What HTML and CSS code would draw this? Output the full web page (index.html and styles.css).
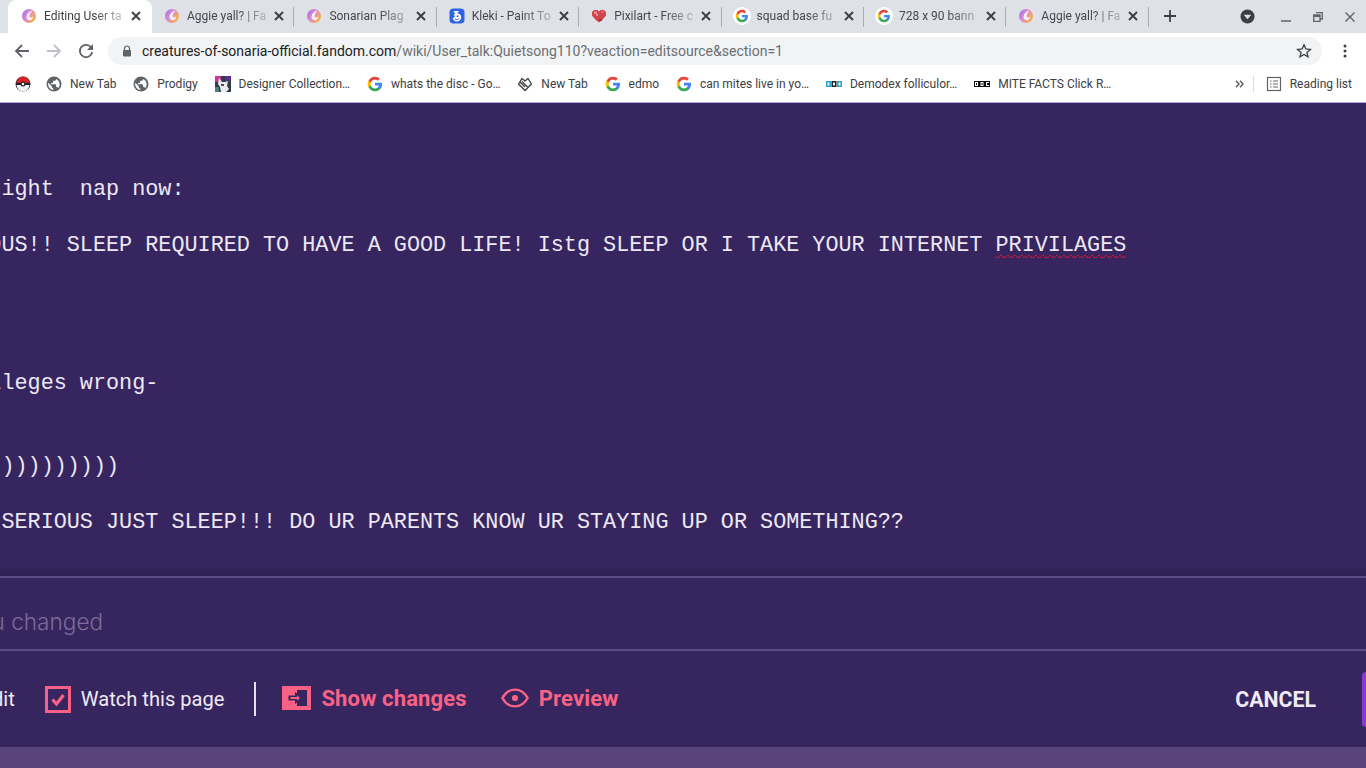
FILE: index.html
```html
<!DOCTYPE html>
<html lang="en">
<head>
<meta charset="utf-8">
<title>Editing User talk</title>
<link rel="stylesheet" href="styles.css">
</head>
<body>
<svg class="defs" width="0" height="0" aria-hidden="true">
  <defs>
    <linearGradient id="fg" x1="0" y1="0" x2="1" y2="0.6"><stop offset="0" stop-color="#9a6cf0"/><stop offset="0.5" stop-color="#dc8ad4"/><stop offset="1" stop-color="#f5b340"/></linearGradient>
    <symbol id="fandom" viewBox="0 0 16 16"><circle cx="8" cy="8" r="7" fill="url(#fg)"/><path d="M11.500 2.800C7.800 3.400 5.200 6.300 5.600 9.500c.3 2 2.200 3.200 4 2.700 1.800-.6 2.600-2.300 2.400-4-.7 1-1.500 1.500-2.500 1.200C8 9 8.500 5.500 11.500 2.800z" fill="#f6eef8"/></symbol>
    <symbol id="g" viewBox="0 0 48 48"><path fill="#4285f4" d="M45.100 24.500c0-1.600-.1-3.100-.4-4.500H24v8.500h11.800c-.5 2.700-2 5-4.400 6.600v5.500h7.100c4.200-3.800 6.600-9.500 6.600-16.100z"/><path fill="#34a853" d="M24 46c5.900 0 10.900-2 14.500-5.300l-7.100-5.500c-2 1.300-4.500 2.100-7.400 2.100-5.700 0-10.500-3.800-12.200-9H4.500v5.700C8.100 41.100 15.500 46 24 46z"/><path fill="#fbbc05" d="M11.800 28.300c-.4-1.300-.7-2.800-.7-4.300s.3-3 .7-4.300V14H4.500C3 17 2 20.400 2 24s1 7 2.500 10l7.300-5.700z"/><path fill="#ea4335" d="M24 10.700c3.200 0 6.100 1.100 8.400 3.300l6.300-6.300C34.900 4.200 29.900 2 24 2 15.500 2 8.100 6.900 4.500 14l7.300 5.700c1.700-5.200 6.500-9 12.200-9z"/></symbol>
    <symbol id="gwhite" viewBox="0 0 16 16"><circle cx="8" cy="8" r="8" fill="#fff"/><use href="#g" x="2" y="2" width="12" height="12"/></symbol>
    <symbol id="globe" viewBox="0 0 16 16"><circle cx="8" cy="8" r="7.500" fill="#5f6368"/><path d="M7.300 13.900C4.400 13.500 2.100 11 2.100 8c0-.5.100-.9.200-1.300l3.500 3.500v.8c0 .8.600 1.400 1.500 1.400zm4.800-1.800c-.2-.6-.7-1-1.300-1h-.7V9c0-.4-.3-.7-.7-.7H5.100V6.900h1.400c.4 0 .7-.3.700-.7V4.800h1.400c.8 0 1.400-.6 1.400-1.400v-.3c2.100.9 3.600 2.900 3.600 5.300 0 1.600-.6 2.800-1.500 3.700z" fill="#fff"/></symbol>
    <symbol id="x" viewBox="0 0 10 10"><path d="M1 1l8 8M9 1L1 9" stroke="#3c4043" stroke-width="1.900" fill="none"/></symbol>
  </defs>
</svg>

<header class="chrome">
  <div class="tabstrip">
    <div class="tab tab-active">
      <svg class="fav"><use href="#fandom"/></svg><span class="tab-title">Editing User ta</span><svg class="tab-x"><use href="#x"/></svg>
    </div>
    <div class="tab">
      <svg class="fav"><use href="#fandom"/></svg><span class="tab-title">Aggie yall? | Fa</span><svg class="tab-x"><use href="#x"/></svg>
    </div>
    <div class="tab">
      <svg class="fav"><use href="#fandom"/></svg><span class="tab-title">Sonarian Plag</span><svg class="tab-x"><use href="#x"/></svg>
    </div>
    <div class="tab">
      <svg class="fav" viewBox="0 0 16 16"><rect x="0.500" y="0.500" width="15" height="15" rx="4" fill="#2f62e4"/><path d="M4.500 3h5.700L8 5.200c2 0 4.200 1.400 4.200 4 0 2.500-2 4.300-4.300 4.300-2.400 0-3.800-1.500-4.200-3.300L6 8.800 4.800 6.500l1.200-1z" fill="#fff"/><circle cx="8.500" cy="8.300" r="1" fill="#2f62e4"/><path d="M6 11.200c1.500.7 3.400.4 4.400-.8" fill="none" stroke="#2f62e4" stroke-width=".9"/></svg><span class="tab-title">Kleki - Paint To</span><svg class="tab-x"><use href="#x"/></svg>
    </div>
    <div class="tab">
      <svg class="fav" viewBox="0 0 16 16"><path d="M1 4l2-2h3.500L8 3.500 9.500 2H13l2 2v3.500l-2 2.500-2.500 2.500L8 14.500 5.500 12.500 3 10 1 7.500z" fill="#d2434c"/><path d="M3 3.500h3v2.500H3zM5 6h2v2H5z" fill="#ea8f8f"/><path d="M10 3h3v2h-3z" fill="#e45f66"/><path d="M8 11h3v2H8z" fill="#a52f38"/></svg><span class="tab-title">Pixilart - Free c</span><svg class="tab-x"><use href="#x"/></svg>
    </div>
    <div class="tab">
      <svg class="fav fav-g"><use href="#gwhite"/></svg><span class="tab-title">squad base fu</span><svg class="tab-x"><use href="#x"/></svg>
    </div>
    <div class="tab">
      <svg class="fav fav-g"><use href="#gwhite"/></svg><span class="tab-title">728 x 90 bann</span><svg class="tab-x"><use href="#x"/></svg>
    </div>
    <div class="tab">
      <svg class="fav"><use href="#fandom"/></svg><span class="tab-title">Aggie yall? | Fa</span><svg class="tab-x"><use href="#x"/></svg>
    </div>
    <svg class="newtab" viewBox="0 0 12 12"><path d="M6 0v12M0 6h12" stroke="#3c4043" stroke-width="1.800"/></svg>
    <div class="win">
      <svg class="media" viewBox="0 0 16 16"><circle cx="8" cy="8" r="7.500" fill="#3c4043"/><path d="M4 6.200h8L8 11z" fill="#dee1e6"/></svg>
      <svg class="min" viewBox="0 0 10 2"><path d="M0 1h10" stroke="#5f6368" stroke-width="1.500"/></svg>
      <svg class="restore" viewBox="0 0 10 10"><path d="M3 .7h6.300V7H7.300M.7 3H7v6.300H.7z" fill="none" stroke="#5f6368" stroke-width="1.300"/><path d="M.7 3H7v2H.7z" fill="#5f6368"/></svg>
      <svg class="close" viewBox="0 0 10 10"><path d="M.5.5l9 9M9.500.5l-9 9" stroke="#5f6368" stroke-width="1.400"/></svg>
    </div>
  </div>

  <div class="toolbar">
    <svg class="nav" viewBox="0 0 16 16"><path d="M15 8H2M8 2L2 8l6 6" fill="none" stroke="#5f6368" stroke-width="1.800"/></svg>
    <svg class="nav" viewBox="0 0 16 16"><path d="M1 8h13M8 2l6 6-6 6" fill="none" stroke="#bdc1c6" stroke-width="1.800"/></svg>
    <svg class="nav" viewBox="0 0 16 16"><path d="M13.500 5A6.200 6.200 0 1 0 14.200 9" fill="none" stroke="#5f6368" stroke-width="1.800"/><path d="M15 1v6H9z" fill="#5f6368"/></svg>
    <div class="omnibox">
      <svg class="lock" viewBox="0 0 10 12"><path d="M2.500 5V3.500a2.500 2.500 0 0 1 5 0V5" fill="none" stroke="#5f6368" stroke-width="1.200"/><rect x="1" y="5" width="8" height="6.500" rx="1" fill="#5f6368"/></svg>
      <span class="url"><span class="url-host">creatures-of-sonaria-official.fandom.com</span>/wiki/User_talk:Quietsong110?veaction=editsource&amp;section=1</span>
      <svg class="star" viewBox="0 0 16 16"><path d="M8 1.800l1.800 4.200 4.600.4-3.500 3 1.100 4.500L8 11.500l-4 2.400 1.100-4.500-3.500-3 4.600-.4z" fill="none" stroke="#3c4043" stroke-width="1.300"/></svg>
    </div>
    <svg class="kebab" viewBox="0 0 4 14"><circle cx="2" cy="2" r="1.500" fill="#3c4043"/><circle cx="2" cy="7" r="1.500" fill="#3c4043"/><circle cx="2" cy="12" r="1.500" fill="#3c4043"/></svg>
  </div>

  <div class="bookmarks">
    <svg class="bm-ball" viewBox="0 0 16 16"><circle cx="8" cy="8" r="7.500" fill="#222"/><path d="M1.500 7a6.500 6.500 0 0 1 13 0z" fill="#d8232a"/><path d="M1.500 9a6.500 6.500 0 0 0 13 0z" fill="#f4f4f4"/><circle cx="8" cy="8" r="2.500" fill="#222"/><circle cx="8" cy="8" r="1.300" fill="#fff"/></svg>
    <a class="bm"><svg class="bm-i"><use href="#globe"/></svg>New Tab</a>
    <a class="bm"><svg class="bm-i"><use href="#globe"/></svg>Prodigy</a>
    <a class="bm"><svg class="bm-i" viewBox="0 0 16 16"><rect width="16" height="16" fill="#2e3f45"/><rect width="6" height="6" fill="#c8389a"/><rect x="10" width="6" height="5" fill="#5a2f8f"/><rect y="11" width="4" height="5" fill="#4c7f78"/><path d="M4 2l3 4h3l3-1-1 5 2 3-3 3H6l-1-5-2-3z" fill="#ecebf2"/><path d="M6 8h3v2H6z" fill="#4a4a55"/></svg>Designer Collection…</a>
    <a class="bm"><svg class="bm-i"><use href="#g"/></svg>whats the disc - Go…</a>
    <a class="bm"><svg class="bm-i" viewBox="0 0 16 16"><path d="M8 14.500L1.500 8 5 2.500 8 5l3-2.500L14.500 8zM5 5.500l6 6M5 2.500L3 6l5 5M11 2.500L8 5" fill="none" stroke="#3c4043" stroke-width="1.300" stroke-linejoin="round"/></svg>New Tab</a>
    <a class="bm"><svg class="bm-i"><use href="#g"/></svg>edmo</a>
    <a class="bm"><svg class="bm-i"><use href="#g"/></svg>can mites live in yo…</a>
    <a class="bm"><svg class="bm-i" viewBox="0 0 16 16"><rect y="5" width="5" height="6" fill="#2f9fc9"/><rect x="5.500" y="5" width="5" height="6" fill="#222"/><rect x="11" y="5" width="5" height="6" fill="#2f9fc9"/><path d="M1.500 6.500h2v3h-2zM7 6.500h2v3H7zM12.500 6.500h2v3h-2z" fill="#dff"/></svg>Demodex folliculor…</a>
    <a class="bm"><svg class="bm-i" viewBox="0 0 16 16"><rect y="5" width="16" height="6" fill="#111"/><path d="M1 6h3v4H1zM6.500 6h3v4h-3zM12 6h3v4h-3z" fill="#fff"/><path d="M2 7h1v2H2zM7.500 7h1v2h-1zM13 7h2v2h-2z" fill="#111"/></svg>MITE FACTS Click R…</a>
    <svg class="bm-more" viewBox="0 0 9 8"><path d="M1 .8L4 4 1 7.200M5 .8L8 4 5 7.200" fill="none" stroke="#5f6368" stroke-width="1.500"/></svg>
    <span class="bm-sep"></span>
    <a class="bm bm-read"><svg class="bm-i" viewBox="0 0 16 16"><rect x="1.500" y="1.500" width="13" height="13" fill="none" stroke="#5f6368" stroke-width="1.200"/><path d="M4 5h1.500M7 5h5M4 8h1.500M7 8h5M4 11h1.500M7 11h5" stroke="#5f6368" stroke-width="1.200"/></svg>Reading list</a>
  </div>
</header>

<main class="page">
  <div class="source"><pre class="code">night  nap now:

OUS!! SLEEP REQUIRED TO HAVE A GOOD LIFE! Istg SLEEP OR I TAKE YOUR INTERNET <span class="misspelt">PRIVILAGES</span>




ileges wrong-


))))))))))

 SERIOUS JUST SLEEP!!! DO UR PARENTS KNOW UR STAYING UP OR SOMETHING??</pre></div>
  <div class="summary"><span class="summary-text">u changed</span></div>
  <div class="actions">
    <span class="minor">dit</span>
    <svg class="check" viewBox="0 0 26 27"><rect x="1.500" y="1.500" width="23" height="24" fill="none" stroke="#fa6285" stroke-width="3"/><path d="M7.500 13.500l4 4.500 7-9" fill="none" stroke="#fa6285" stroke-width="3.200"/></svg>
    <span class="watch">Watch this page</span>
    <span class="divider"></span>
    <button class="link link-show"><svg class="show-i" viewBox="0 0 29 24"><path d="M0 0h29v24H0z" fill="#fa6285"/><path d="M15 4h10v16H15z" fill="#37255f"/><path d="M6.500 9.500H13V6l7.500 6-7.500 6v-3.500H6.500z" fill="#37255f"/><path d="M8.500 11H15V9.200l3 2.800-3 2.800V13H8.500z" fill="#fa6285"/></svg>Show changes</button>
    <button class="link link-preview"><svg class="eye" viewBox="0 0 30 22"><path d="M1.500 11C5 4.500 10 2 15 2s10 2.500 13.500 9C25 17.500 20 20 15 20S5 17.500 1.500 11z" fill="none" stroke="#fa6285" stroke-width="2.600"/><circle cx="15" cy="11" r="3.300" fill="#fa6285"/></svg>Preview</button>
    <span class="cancel">CANCEL</span>
    <span class="save"></span>
  </div>
  <div class="footer"></div>
</main>
</body>
</html>
```

FILE: styles.css
```css
* { box-sizing: border-box; }
html, body { margin: 0; padding: 0; height: 100%; overflow: hidden; }
body { width: 1366px; height: 768px; display: flex; flex-direction: column; background: #37255f; font-family: Roboto, "Liberation Sans", sans-serif; }
.defs { display: block; height: 0; }

.chrome { flex: none; background: #fff; }
.tabstrip { height: 33px; background: #dee1e6; display: flex; align-items: center; padding-left: 8px; }
.tab { flex: none; width: 142.400px; height: 33px; padding: 0 0 2px 12px; display: flex; align-items: center; font-size: 12px; color: #45474b; background-image: linear-gradient(#a9adb2, #a9adb2); background-size: 1px 20px; background-repeat: no-repeat; background-position: right center; }
.tab-active { width: 144px; padding-left: 13px; background: #fff; border-radius: 8px 8px 0 0; color: #3c4043; }
.fav { flex: none; width: 16px; height: 16px; margin-right: 7px; }
.fav-g { width: 18px; height: 18px; margin-left: -1px; margin-right: 6px; }
.tab-title { flex: none; width: 80px; margin-right: 7px; white-space: nowrap; overflow: hidden; line-height: 16px; -webkit-mask-image: linear-gradient(90deg, #000 62%, rgba(0,0,0,.25) 100%); mask-image: linear-gradient(90deg, #000 62%, rgba(0,0,0,.25) 100%); }
.tab-x { flex: none; width: 10px; height: 10px; }
.newtab { flex: none; width: 12px; height: 12px; margin-left: 15.500px; margin-bottom: 1px; }
.win { flex: 1; display: flex; align-items: center; }
.media { width: 15px; height: 15px; margin-left: 64px; }
.min { width: 10px; height: 2px; margin-left: 26px; margin-top: 8px; }
.restore { width: 10px; height: 10px; margin-left: 22px; }
.close { width: 10px; height: 10px; margin-left: 22px; }

.toolbar { height: 36px; background: #fff; display: flex; align-items: center; padding-left: 14px; }
.nav { flex: none; width: 16px; height: 16px; margin-right: 16px; }
.omnibox { flex: none; width: 1214px; height: 28px; margin-left: -2px; border-radius: 14px; background: #f1f3f4; display: flex; align-items: center; padding: 0 10px 0 14px; }
.lock { flex: none; width: 10px; height: 12px; margin-right: 10px; }
.url { flex: 1; font-size: 14px; color: #6b6f74; white-space: nowrap; }
.url-host { color: #202124; }
.star { flex: none; width: 16px; height: 16px; }
.kebab { flex: none; width: 4px; height: 14px; margin-left: 21px; }

.bookmarks { height: 34px; background: #fff; display: flex; align-items: center; padding: 0 0 3px 15px; border-bottom: 1px solid #b9a9dc; font-size: 12px; color: #3c4043; }
.bm-ball { flex: none; width: 16px; height: 16px; margin-right: 15px; }
.bm { flex: none; display: flex; align-items: center; margin-right: 16.800px; white-space: nowrap; }
.bm-i { flex: none; width: 16px; height: 16px; margin-right: 8px; }
.bm-more { flex: none; width: 9px; height: 8px; margin-left: auto; margin-right: 9px; }
.bm-sep { flex: none; width: 1px; height: 16px; background: #dadce0; margin-right: 12px; }
.bm-read { margin-right: 14px; }

.page { flex: 1; display: flex; flex-direction: column; min-height: 0; overflow: hidden; background: #37255f; }
.source { height: 473px; overflow: hidden; flex: none; padding-top: 73.300px; background: linear-gradient(#37255f 0, #37255f 463px, #2f1f54 473px); }
.code { margin: 0 0 0 -11.700px; font-family: "Liberation Mono", monospace; font-size: 21.800px; line-height: 27.720px; color: #ece8f3; white-space: pre; }
.misspelt { text-decoration: underline wavy #ee1030 1.200px; text-underline-offset: 2.500px; }
.summary { height: 75px; flex: none; border-top: 2px solid #5d4b85; border-bottom: 2px solid #5d4b85; display: flex; align-items: center; padding-top: 16px; overflow: hidden; }
.summary-text { font-family: Inter, Roboto, sans-serif; font-size: 22.600px; font-weight: 300; color: #7b6c98; margin-left: -8.500px; }
.actions { flex: none; height: 96px; display: flex; align-items: center; color: #efeaf5; overflow: hidden; }
.minor { flex: none; font-size: 20.100px; font-weight: 400; margin-left: -8px; white-space: nowrap; }
.check { flex: none; width: 26px; height: 27px; margin-left: 30px; }
.watch { font-size: 20.100px; font-weight: 400; margin-left: 10px; }
.divider { flex: none; width: 2px; height: 34px; background: #e7e0f2; margin-left: 30px; }
.link { background: none; border: 0; padding: 0 0 2px; display: flex; align-items: center; font-family: Roboto, sans-serif; font-size: 22px; font-weight: 700; letter-spacing: .15px; color: #fa6285; }
.show-i { flex: none; width: 29px; height: 24px; margin-right: 10px; }
.link-show { margin-left: 26px; }
.link-preview { margin-left: 34px; }
.eye { flex: none; width: 28px; height: 22px; margin-right: 10px; }
.cancel { margin-left: auto; font-size: 21.300px; font-weight: 700; color: #efeaf5; margin-right: 46px; }
.save { flex: none; width: 4px; height: 55px; background: #8a38d2; border-radius: 4px 0 0 4px; }
.footer { flex: 1; background: #58437a; }
```
